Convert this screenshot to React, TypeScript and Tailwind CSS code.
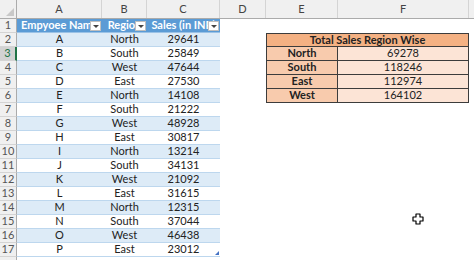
import React from "react"

const rows: [string, string, number][] = [
  ["A", "North", 29641],
  ["B", "South", 25849],
  ["C", "West", 47644],
  ["D", "East", 27530],
  ["E", "North", 14108],
  ["F", "South", 21222],
  ["G", "West", 48928],
  ["H", "East", 30817],
  ["I", "North", 13214],
  ["J", "South", 34131],
  ["K", "West", 21092],
  ["L", "East", 31615],
  ["M", "North", 12315],
  ["N", "South", 37044],
  ["O", "West", 46438],
  ["P", "East", 23012],
]

const totals: [string, number][] = [
  ["North", 69278],
  ["South", 118246],
  ["East", 112974],
  ["West", 164102],
]

function FilterButton() {
  return (
    <div className="absolute right-[1px] top-[2px] w-[11px] h-[10px] bg-white border border-[#bfbfbf] flex items-center justify-center">
      <div className="w-0 h-0 border-l-[3px] border-r-[3px] border-t-[3px] border-l-transparent border-r-transparent border-t-[#444]" />
    </div>
  )
}

function RowHead({ n }: { n?: number }) {
  const sel = n === 3
  return (
    <div
      className={
        "w-[17px] shrink-0 h-full flex items-center justify-center text-[11px] border-b border-[#d4d4d4] " +
        (sel ? "bg-[#d2d2d2] text-[#217346] border-r-2 border-r-[#217346]" : "bg-[#f0f0f0] text-[#555] border-r border-r-[#ababab]")
      }
    >
      {n}
    </div>
  )
}

export default function App() {
  return (
    <div className="w-[474px] h-[260px] overflow-hidden bg-white relative" style={{ fontFamily: "Lato, 'Noto Sans', sans-serif" }}>
      {/* column letters */}
      <div className="flex h-[19px] bg-[#f0f0f0] border-b border-[#ababab] text-[11px] text-[#444]">
        <div className="w-[17px] shrink-0 border-r border-[#ababab] relative">
          <div className="absolute right-[2px] bottom-[2px] w-0 h-0" style={{ borderBottom: "8px solid #c8c8c8", borderLeft: "8px solid transparent" }} />
        </div>
        {[
          ["A", "w-[85px]"],
          ["B", "w-[45px]"],
          ["C", "w-[73px]"],
          ["D", "w-[46px]"],
          ["E", "w-[72px]"],
          ["F", "w-[131px]"],
        ].map(([l, w]) => (
          <div key={l} className={w + " shrink-0 border-r border-[#d4d4d4] flex items-center justify-center"}>
            {l}
          </div>
        ))}
        <div className="flex-1" />
      </div>

      {/* row 1: table headers */}
      <div className="flex h-[14px] text-[11px]">
        <RowHead n={1} />
        {[
          ["Empyoee Name", "w-[85px]"],
          ["Region", "w-[45px]"],
          ["Sales (in INR)", "w-[73px]"],
        ].map(([t, w]) => (
          <div key={t} className={w + " shrink-0 relative overflow-hidden bg-[#5b9bd5] text-white font-bold flex items-center justify-center whitespace-nowrap border-b border-[#9bc2e6]"}>
            <span>{t}</span>
            <FilterButton />
          </div>
        ))}
      </div>

      {rows.map(([name, region, sales], i) => {
        const n = i + 2
        const band = i % 2 === 0 ? "bg-[#ddebf7]" : "bg-white"
        const ti = n - 3
        return (
          <div key={n} className="flex h-[14px] text-[11px] text-[#222]">
            <RowHead n={n} />
            <div className={"w-[85px] shrink-0 flex items-center justify-center border-b border-[#bdd7ee] " + band}>{name}</div>
            <div className={"w-[45px] shrink-0 flex items-center justify-center border-b border-[#bdd7ee] " + band}>{region}</div>
            <div className={"w-[73px] shrink-0 flex items-center justify-center border-b border-[#bdd7ee] relative " + band}>
              {sales}
              {n === 17 && (
                <div className="absolute right-[1px] bottom-[1px] w-0 h-0" style={{ borderBottom: "4px solid #4472c4", borderLeft: "4px solid transparent" }} />
              )}
            </div>
            <div className="w-[46px] shrink-0" />
            {n === 2 && (
              <div className="w-[203px] shrink-0 bg-[#f4b183] border border-[#3c3c3c] flex items-center justify-center font-bold">
                Total Sales Region Wise
              </div>
            )}
            {ti >= 0 && ti < totals.length && (
              <>
                <div className="w-[72px] shrink-0 bg-[#f8cbad] border-l border-r border-b border-[#3c3c3c] flex items-center justify-center font-bold">
                  {totals[ti][0]}
                </div>
                <div className="w-[131px] shrink-0 bg-[#fce4d6] border-r border-b border-[#3c3c3c] flex items-center justify-center">
                  {totals[ti][1]}
                </div>
              </>
            )}
          </div>
        )
      })}

      {/* partially visible next row */}
      <div className="flex h-[14px]">
        <RowHead />
      </div>

      {/* cell cursor */}
      <svg className="absolute left-[412px] top-[213px]" width="12" height="12" viewBox="0 0 12 12">
        <path d="M4 1H8V4H11V8H8V11H4V8H1V4H4Z" fill="#fff" stroke="#000" strokeWidth="1.2" strokeLinejoin="round" />
      </svg>
    </div>
  )
}
